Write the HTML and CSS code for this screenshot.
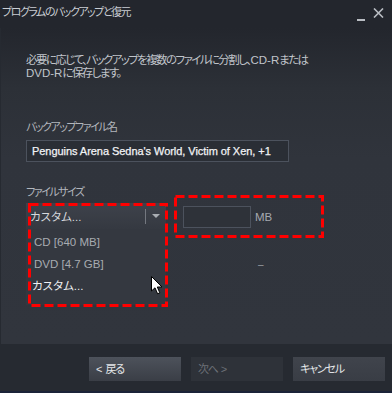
FILE: index.html
```html
<!DOCTYPE html>
<html lang="ja">
<head>
<meta charset="utf-8">
<link rel="stylesheet" href="styles.css">
</head>
<body>
<div class="window">
  <div class="titlebar">
    <span class="title jp">プログラムのバックアップと復元</span>
    <div class="winctl">
      <span class="min"></span>
      <svg class="close" width="11" height="10" viewBox="0 0 11 10"><path d="M1 0.5 L10 9.5 M10 0.5 L1 9.5" stroke="#b9bdc3" stroke-width="1.6"/></svg>
    </div>
  </div>
  <div class="panel">
    <p class="desc jp">必要に応じて、バックアップを複数のファイルに分割し、<span class="lat">CD-R</span>または<br><span class="lat">DVD-R</span>に保存します。</p>
    <div class="label first jp">バックアップファイル名</div>
    <div class="textbox">Penguins Arena Sedna's World, Victim of Xen, +1</div>
    <div class="label second jp">ファイルサイズ</div>
    <div class="sizerow">
      <div class="dropdown">
        <div class="ddhead">
          <span class="ddval">カスタム...</span>
          <span class="ddsep"></span>
          <span class="ddarrow"></span>
        </div>
        <ul class="ddlist">
          <li>CD [640 MB]</li>
          <li>DVD [4.7 GB]</li>
          <li class="sel">カスタム...</li>
        </ul>
      </div>
      <div class="custom">
        <div class="mbline">
          <div class="mbbox"></div>
          <span class="mb">MB</span>
        </div>
        <div class="dash">–</div>
      </div>
    </div>
    <svg class="mark mark1" width="142" height="106" viewBox="0 0 142 106"><rect x="1.5" y="1.5" width="137" height="101" fill="none" stroke="#f00" stroke-width="3" stroke-dasharray="9 4"/></svg>
    <svg class="mark mark2" width="152" height="45" viewBox="0 0 152 45"><rect x="1.5" y="1.5" width="147" height="40" fill="none" stroke="#f00" stroke-width="3" stroke-dasharray="9 4"/></svg>
    <svg class="cursor" width="13" height="19" viewBox="0 0 13 19"><path d="M0.5 0.5 L0.5 15 L4 11.8 L6.6 17.8 L8.8 16.8 L6.3 11 L11 11 Z" fill="#fff" stroke="#000" stroke-width="1"/></svg>
  </div>
  <div class="footer">
    <div class="btn back"><span class="lat">&lt; </span>戻る</div>
    <div class="btn next">次へ<span class="lat"> &gt;</span></div>
    <div class="btn cancel">キャンセル</div>
  </div>
  <div class="taskline"></div>
</div>
</body>
</html>
```
FILE: styles.css
```css
* { box-sizing: border-box; margin: 0; padding: 0; }
html, body { width: 392px; height: 393px; overflow: hidden; }
body {
  background: #262a31;
  font-family: "Liberation Sans", "Noto Sans CJK JP", sans-serif;
  font-size: 11px;
  font-feature-settings: "palt" 1;
  color: #c2c6cc;
}
.jp { letter-spacing: -1.5px; }
.lat { letter-spacing: 0; }
.window { width: 392px; height: 393px; display: flex; flex-direction: column; }
.titlebar {
  height: 28px;
  background: #23262d;
  display: flex;
  align-items: flex-start;
  justify-content: space-between;
  padding: 5px 8px 0 2px;
}
.title { font-size: 11px; line-height: 14px; color: #c9cdd3; white-space: nowrap; }
.winctl { display: flex; align-items: flex-start; gap: 8px; padding-top: 3px; }
.min { display: block; width: 8px; height: 2px; background: #b9bdc3; margin-top: 11px; }
.close { display: block; }
.panel {
  position: relative;
  height: 316px;
  margin: 0 0 0 1px;
  background: linear-gradient(#23262d 0px, #2c3037 60px, #30343c 130px, #31353d 316px);
  padding: 26px 0 0 25px;
}
.desc { font-size: 11.5px; line-height: 13px; color: #c0c4ca; white-space: nowrap; letter-spacing: -1.6px; }
.desc .lat { letter-spacing: 0; }
.label { font-size: 11px; line-height: 13px; color: #b2b6bc; }
.label.first { margin-top: 41px; }
.label.second { margin-top: 24px; }
.textbox {
  margin-top: 6px;
  width: 263px;
  height: 22px;
  border: 1px solid #4c525d;
  background: #2a2e35;
  color: #f2f3f5;
  font-size: 11px;
  letter-spacing: -0.05px;
  -webkit-text-stroke: 0.25px #f2f3f5;
  padding: 4px 0 0 5px;
  line-height: 13px;
  white-space: nowrap;
}
.sizerow { display: flex; margin-top: 4px; gap: 17px; }
.dropdown { width: 140px; }
.ddhead {
  height: 26px;
  background: linear-gradient(#3e424b, #353941);
  display: flex;
  align-items: center;
  padding-left: 4px;
  color: #d6d9dd;
  font-size: 11.5px;
}
.ddval { flex: 1; }
.ddsep { width: 1px; height: 15px; background: #747880; margin-right: 6px; }
.ddarrow {
  width: 0; height: 0;
  border-left: 4px solid transparent;
  border-right: 4px solid transparent;
  border-top: 4px solid #a9adb3;
  margin-right: 6px;
}
.ddlist {
  list-style: none;
  height: 76px;
  background: #343840;
  padding: 7px 0 0 8px;
}
.ddlist li { line-height: 13px; height: 22px; color: #a7abb1; font-size: 11.5px; }
.ddlist li.sel { color: #eef0f2; margin-left: -2px; }
.custom { display: flex; flex-direction: column; }
.mbline { display: flex; align-items: center; margin-top: 3px; gap: 4px; }
.mbbox { width: 68px; height: 22px; border: 1px solid #4c525d; background: #2e3239; }
.mb { color: #a5a9af; font-size: 11.5px; }
.dash { margin-top: 31px; margin-left: 75px; color: #9a9ea4; font-size: 10px; line-height: 12px; }
.mark { position: absolute; display: block; }
.mark1 { left: 27px; top: 175px; }
.mark2 { left: 173px; top: 167px; }
.cursor { position: absolute; left: 150px; top: 248px; display: block; }
.footer {
  height: 47px;
  display: flex;
  justify-content: flex-end;
  gap: 10px;
  padding: 13px 7px 0 0;
  background: #262a31;
}
.btn {
  width: 92px;
  height: 24px;
  line-height: 24px;
  padding-left: 7px;
  font-size: 11px;
  letter-spacing: -1.2px;
}
.back { background: linear-gradient(#4d525b, #3a3e46); color: #e4e6e9; }
.next { background: #2e3239; color: #6c7077; }
.cancel { background: linear-gradient(#40444c, #393d45); color: #e4e6e9; }
.taskline { height: 2px; background: #1b2338; }
```
